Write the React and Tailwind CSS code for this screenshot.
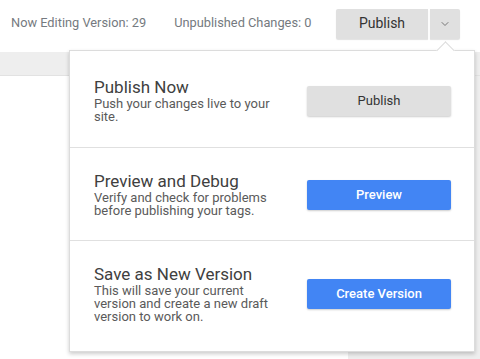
import { ChevronDown } from 'lucide-react';

const sections = [
  {
    title: 'Publish Now',
    desc: 'Push your changes live to your site.',
    button: 'Publish',
    primary: false,
    pad: 'pt-[27px] pb-[24px]',
  },
  {
    title: 'Preview and Debug',
    desc: 'Verify and check for problems before publishing your tags.',
    button: 'Preview',
    primary: true,
    pad: 'pt-[24px] pb-[23px]',
  },
  {
    title: 'Save as New Version',
    desc: 'This will save your current version and create a new draft version to work on.',
    button: 'Create Version',
    primary: true,
    pad: 'pt-[24px] pb-[28px]',
  },
];

export default function App() {
  return (
    <div className="relative h-[359px] w-[480px] overflow-hidden bg-white font-['Roboto',sans-serif]">
      {/* header bar */}
      <div className="flex h-[46px] items-center pl-[11px] pr-[20px] text-[12.8px] text-[#757a80]">
        <span>Now Editing Version: 29</span>
        <span className="ml-[28px]">Unpublished Changes: 0</span>
        <div className="ml-auto flex gap-[2px] pt-[1px]">
          <button className="h-[30px] w-[92px] rounded-l-[2px] bg-[#e0e0e0] text-[14px] text-[#333] shadow-[0_1px_1px_rgba(0,0,0,0.12)]">
            Publish
          </button>
          <button className="flex h-[30px] w-[30px] items-center justify-center rounded-r-[2px] bg-[#e0e0e0] text-[#777] shadow-[0_1px_1px_rgba(0,0,0,0.12)]">
            <ChevronDown className="size-[12px]" strokeWidth={2} aria-hidden />
          </button>
        </div>
      </div>

      {/* page behind the menu */}
      <div className="mt-[6px] h-[24px] border-b border-[#e2e2e2] bg-[#eeeeee]" />
      <div className="flex h-[283px]">
        <div className="flex-1" />
        <div className="w-[132px] bg-[#eeeeee]" />
      </div>

      {/* dropdown menu */}
      <div className="absolute left-[69px] top-[50px] w-[406px] border border-[#dcdcdc] bg-white shadow-[0_2px_4px_rgba(0,0,0,0.2)]">
        <div className="absolute -top-[7px] right-[22px] h-[13px] w-[13px] rotate-45 border-l border-t border-[#dcdcdc] bg-white" />
        {sections.map((s, i) => (
          <div
            key={i}
            className={`relative flex items-center justify-between pl-[24px] pr-[23px] ${s.pad} ${i > 0 ? 'border-t border-[#e0e0e0]' : ''}`}
          >
            <div className="w-[178px]">
              <div className="text-[17px] leading-[19px] text-[#404040]">{s.title}</div>
              <p className="m-0 text-[13px] leading-[13px] text-[#5a5a5a]">{s.desc}</p>
            </div>
            <button
              className={`h-[30px] w-[144px] rounded-[2px] text-[13px] shadow-[0_1px_2px_rgba(0,0,0,0.2)] ${
                s.primary ? 'bg-[#4285f4] font-medium text-white' : 'bg-[#e0e0e0] text-[#333]'
              }`}
            >
              {s.button}
            </button>
          </div>
        ))}
      </div>
    </div>
  );
}
